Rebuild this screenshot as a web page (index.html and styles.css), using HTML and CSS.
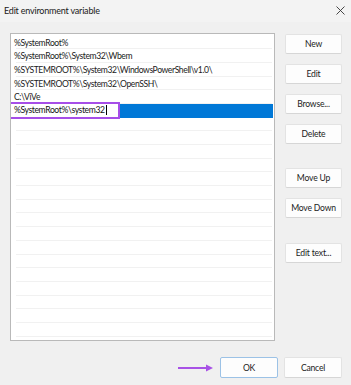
FILE: index.html
```html
<!DOCTYPE html>
<html lang="en">
<head>
    <meta charset="UTF-8">
    <title>Edit environment variable</title>
    <link rel="stylesheet" href="styles.css">
</head>
<body>
    <div class="window">
        <div class="titlebar">
            <span class="title">Edit environment variable</span>
            <svg class="close" width="9" height="9" viewBox="0 0 9 9">
                <path d="M0.5 0.5 L8.5 8.5 M8.5 0.5 L0.5 8.5" stroke="#333" stroke-width="0.9" fill="none"/>
            </svg>
        </div>
        <div class="main">
            <div class="list">
                <div class="row">%SystemRoot%</div>
                <div class="row">%SystemRoot%\System32\Wbem</div>
                <div class="row">%SYSTEMROOT%\System32\WindowsPowerShell\v1.0\</div>
                <div class="row">%SYSTEMROOT%\System32\OpenSSH\</div>
                <div class="row">C:\ViVe</div>
                <div class="row selected">
                    <span class="edit">%SystemRoot%\system32<span class="caret"></span></span>
                    <span class="fill"></span>
                </div>
                <div class="row"></div><div class="row"></div><div class="row"></div><div class="row"></div>
                <div class="row"></div><div class="row"></div><div class="row"></div><div class="row"></div>
                <div class="row"></div><div class="row"></div><div class="row"></div><div class="row"></div>
                <div class="row"></div><div class="row"></div><div class="row"></div><div class="row"></div>
            </div>
            <div class="side">
                <button class="btn">New</button>
                <button class="btn">Edit</button>
                <button class="btn">Browse...</button>
                <button class="btn">Delete</button>
                <button class="btn gap-up">Move Up</button>
                <button class="btn">Move Down</button>
                <button class="btn gap-text">Edit text...</button>
            </div>
        </div>
        <div class="footer">
            <svg class="arrow" width="36" height="8" viewBox="0 0 36 8">
                <path d="M0 4 H30" stroke="#a852e6" stroke-width="2"/>
                <path d="M28 0.5 L35 4 L28 7.5 Z" fill="#a852e6"/>
            </svg>
            <button class="btn default">OK</button>
            <button class="btn">Cancel</button>
        </div>
    </div>
</body>
</html>
```

FILE: styles.css
```css
/* styles.css */

* {
    box-sizing: border-box;
    margin: 0;
    padding: 0;
}

body {
    font-family: Lato, "Open Sans", sans-serif;
    font-size: 8.6px;
    letter-spacing: -0.4px;
    color: #1b1b1b;
    background: #f0f0f0;
    width: 351px;
    height: 385px;
    overflow: hidden;
}

.window {
    height: 385px;
    background: #f0f0f0;
}

.titlebar {
    height: 22px;
    display: flex;
    align-items: center;
    justify-content: space-between;
    padding: 0 6px 2px 4px;
    background: #f3f3f3;
}

.title {
    font-size: 9px;
    letter-spacing: -0.2px;
    color: #202020;
}

.main {
    display: flex;
    padding: 11px 0 0 10px;
}

.list {
    width: 265px;
    height: 308px;
    padding-top: 1.5px;
    border: 1px solid #b9b9b9;
    background: #fff;
    overflow: hidden;
}

.row {
    height: 13.7px;
    line-height: 14px;
    padding-left: 3px;
    white-space: nowrap;
    background: linear-gradient(#f1f1f1, #f1f1f1) no-repeat left 5px bottom / calc(100% - 7px) 1px;
}

.row.selected {
    display: flex;
    padding-left: 0;
    background: none;
}

.edit {
    display: flex;
    align-items: center;
    width: 112px;
    height: 17px;
    margin: -2px 0 -1px -3px;
    padding-left: 4px;
    border: 2px solid #a64ee8;
    background: #fff;
    color: #111;
}

.caret {
    width: 1px;
    height: 10px;
    margin-left: 1px;
    background: #000;
}

.fill {
    flex: 1;
    margin-right: 1px;
    background: #0078d7;
}

.side {
    display: flex;
    flex-direction: column;
    margin-left: 10px;
    padding-top: 1px;
}

.btn {
    width: 57px;
    height: 20px;
    margin-bottom: 10px;
    font-family: inherit;
    font-size: 8.6px;
    letter-spacing: -0.2px;
    color: #1b1b1b;
    background: #fdfdfd;
    border: 1px solid #e3e3e3;
    border-bottom-color: #d6d6d6;
    border-radius: 2px;
}

.gap-up {
    margin-top: 14px;
}

.gap-text {
    margin-top: 15px;
}

.footer {
    display: flex;
    align-items: center;
    justify-content: flex-end;
    gap: 6px;
    padding: 16px 9px 0 0;
}

.footer .btn {
    width: 58px;
    height: 21px;
    margin-bottom: 0;
}

.footer .default {
    border-color: #9cc2e6;
}
```
